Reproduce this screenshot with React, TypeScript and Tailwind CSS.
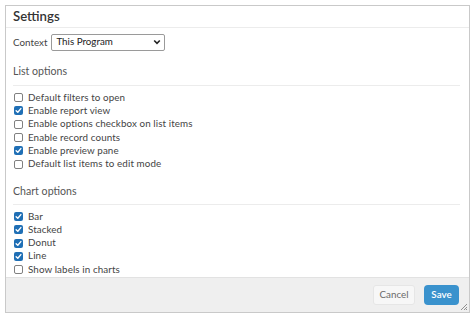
import React from "react";

const Check = ({ checked }: { checked: boolean }) =>
  checked ? (
    <span className="w-[9px] h-[9px] rounded-[2px] bg-[#1f6fb5] flex items-center justify-center shrink-0">
      <svg width="7" height="7" viewBox="0 0 8 8">
        <path d="M1.3 4.2 L3.2 6 L6.7 1.8" stroke="white" strokeWidth="1.6" fill="none" strokeLinecap="round" strokeLinejoin="round" />
      </svg>
    </span>
  ) : (
    <span className="w-[9px] h-[9px] rounded-[2px] border border-[#808080] bg-white shrink-0" />
  );

const Row = ({ label, checked }: { label: string; checked: boolean }) => (
  <div className="flex items-center h-[13.3px] gap-[5px] shrink-0">
    <Check checked={checked} />
    <span className="text-[9.8px] leading-none text-[#444] tracking-[0.1px]">{label}</span>
  </div>
);

export default function App() {
  return (
    <div className="w-[474px] h-[318px] bg-white pt-[5px] pl-[5px]" style={{ fontFamily: "Lato, 'Noto Sans', sans-serif" }}>
      <div className="relative w-[465px] h-[308px] border border-[#c9c9c9] flex flex-col bg-white">
        <div className="h-[22px] shrink-0 border-b border-[#ececec] flex items-center pt-[1px] px-[7px]">
          <span className="text-[13.2px] font-semibold text-[#333] leading-none">Settings</span>
        </div>
        <div className="flex-1 flex flex-col px-[7px] min-h-0">
          <div className="flex items-center h-[28px] shrink-0 gap-[4px]">
            <span className="text-[9.8px] text-[#444]">Context</span>
            <div className="w-[114px] h-[17px] border border-[#9a9a9a] rounded-[2px] flex items-center justify-between pl-[4px] pr-[3px]">
              <span className="text-[9.8px] text-[#222] leading-none">This Program</span>
              <svg width="8" height="6" viewBox="0 0 8 6">
                <path d="M1.2 1.5 L4 4.3 L6.8 1.5" stroke="#222" strokeWidth="1.6" fill="none" />
              </svg>
            </div>
          </div>
          <div className="h-[30px] shrink-0 mr-[2px] pt-[2px] border-b border-[#ececec] flex items-center">
            <span className="text-[10.6px] text-[#555] leading-none">List options</span>
          </div>
          <div className="pt-[5px] pl-[1px] flex flex-col shrink-0">
            <Row label="Default filters to open" checked={false} />
            <Row label="Enable report view" checked={true} />
            <Row label="Enable options checkbox on list items" checked={false} />
            <Row label="Enable record counts" checked={false} />
            <Row label="Enable preview pane" checked={true} />
            <Row label="Default list items to edit mode" checked={false} />
          </div>
          <div className="h-[34px] shrink-0 mr-[2px] pb-[7px] border-b border-[#ececec] flex items-end">
            <span className="text-[10.6px] text-[#555] leading-[12px]">Chart options</span>
          </div>
          <div className="pt-[5px] pl-[1px] flex flex-col shrink-0">
            <Row label="Bar" checked={true} />
            <Row label="Stacked" checked={true} />
            <Row label="Donut" checked={true} />
            <Row label="Line" checked={true} />
            <Row label="Show labels in charts" checked={false} />
          </div>
        </div>
        <div className="h-[35px] shrink-0 bg-[#efefef] border-t border-[#e2e2e2] flex items-center justify-end gap-[9px] pr-[10px] pb-[1px]">
          <div className="w-[42px] h-[20px] rounded-[3px] bg-[#f7f7f7] border border-[#e6e6e6] flex items-center justify-center">
            <span className="text-[9.8px] text-[#6a6a6a]">Cancel</span>
          </div>
          <div className="w-[35px] h-[20px] rounded-[4px] bg-[#3a92cd] flex items-center justify-center">
            <span className="text-[9.8px] text-white font-semibold">Save</span>
          </div>
          <svg className="absolute right-[1px] bottom-[1px]" width="8" height="8" viewBox="0 0 8 8">
            <path d="M7 1 L1 7 M7 4 L4 7 M7 6 L6 7" stroke="#777" strokeWidth="0.8" />
          </svg>
        </div>
      </div>
    </div>
  );
}
